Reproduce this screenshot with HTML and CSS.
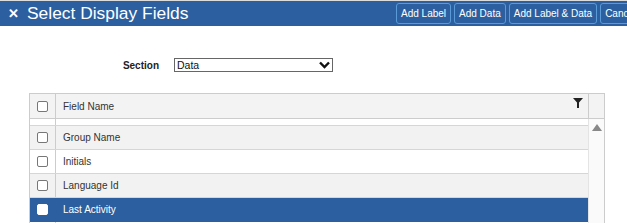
FILE: index.html
```html
<!DOCTYPE html>
<html>
<head>
<meta charset="utf-8">
<link rel="stylesheet" href="styles.css">
</head>
<body>
<div class="titlebar">
  <span class="close">✕</span>
  <span class="title">Select Display Fields</span>
  <div class="actions">
    <button class="btn">Add Label</button>
    <button class="btn">Add Data</button>
    <button class="btn">Add Label &amp; Data</button>
    <button class="btn">Cancel</button>
  </div>
</div>
<div class="content">
  <div class="section-row">
    <label class="section-label">Section</label>
    <div class="select"><span>Data</span>
      <svg class="chev" width="11" height="8" viewBox="0 0 11 8"><path d="M1 1.5 L5.5 6 L10 1.5" fill="none" stroke="#111" stroke-width="2.4"/></svg>
    </div>
  </div>
  <div class="grid">
    <div class="ghead">
      <div class="cb-cell"><span class="cb"></span></div>
      <div class="name-cell hname">Field Name
        <svg class="filter" width="10" height="10" viewBox="0 0 10 10"><path d="M0 0 H10 L6 4.5 V10 H4 V4.5 Z" fill="#222"/></svg>
      </div>
      <div class="scroll-head"></div>
    </div>
    <div class="gbody">
      <div class="rows">
        <div class="row partial"><div class="cb-cell"><span class="cb"></span></div><div class="name-cell">Group Id</div></div>
        <div class="row alt"><div class="cb-cell"><span class="cb"></span></div><div class="name-cell">Group Name</div></div>
        <div class="row"><div class="cb-cell"><span class="cb"></span></div><div class="name-cell">Initials</div></div>
        <div class="row alt"><div class="cb-cell"><span class="cb"></span></div><div class="name-cell">Language Id</div></div>
        <div class="row sel"><div class="cb-cell"><span class="cb"></span></div><div class="name-cell">Last Activity</div></div>
        <div class="row"><div class="cb-cell"><span class="cb"></span></div><div class="name-cell">Last Name</div></div>
      </div>
      <div class="scrollbar"><span class="up"></span></div>
    </div>
  </div>
</div>
</body>
</html>
```
FILE: styles.css
```css
html, body { margin: 0; padding: 0; background: #fff; overflow: hidden; }
body { font-family: "Liberation Sans", Arial, sans-serif; color: #333; width: 627px; height: 223px; }

.titlebar {
  border-top: 1px solid #dcdcdc;
  height: 26px;
  background: #2c5f9f;
  display: flex;
  align-items: center;
  color: #fff;
  white-space: nowrap;
  overflow: hidden;
  box-sizing: border-box;
}
.close { font-size: 13px; font-weight: bold; margin-left: 8px; width: 19px; flex: none; }
.title { font-size: 17.4px; width: 369px; flex: none; }
.actions { display: flex; gap: 3px; flex: none; }
.btn {
  font-family: "Liberation Sans", Arial, sans-serif;
  font-size: 10px;
  color: #fff;
  background: #2c5f9f;
  border: 1px solid #5a9ad8;
  border-radius: 3px;
  height: 21px;
  padding: 0 4px;
  line-height: 19px;
}

.content { padding: 32px 0 0 29px; }
.section-row { display: flex; align-items: center; height: 14px; }
.section-label { font-size: 10px; font-weight: bold; color: #222; width: 50px; text-align: right; margin-left: 80px; margin-right: 15px; }
.select {
  width: 153px; height: 12px; border: 1px solid #666;
  display: flex; align-items: center; justify-content: space-between;
  font-size: 10.5px; color: #111; padding: 0 2px; background: #fff;
}

.grid {
  margin-top: 21px;
  width: 574px;
  border: 1px solid #ccc;
  border-bottom: none;
}
.ghead { display: flex; height: 24px; background: #f3f3f3; border-bottom: 1px solid #ccc; }
.cb-cell { width: 25px; border-right: 1px solid #ccc; display: flex; align-items: center; justify-content: center; flex: none; }
.cb { width: 9px; height: 9px; border: 1px solid #777; border-radius: 2px; background: #fff; display: block; }
.name-cell { flex: 1; font-size: 10px; color: #333; padding-left: 7px; display: flex; align-items: center; }
.hname { justify-content: space-between; padding-right: 5px; }
.filter { margin-top: -6px; }
.scroll-head { width: 15px; border-left: 1px solid #ccc; flex: none; }

.gbody { display: flex; height: 110px; overflow: hidden; }
.rows { flex: 1; border-right: 1px solid #e4e4e4; }
.row { display: flex; height: 23px; border-bottom: 1px solid #d6d6d6; background: #fff; }
.row.alt { background: #f2f2f2; }
.row.partial { margin-top: -17px; }
.row.sel { background: #2c5f9f; border-bottom-color: #2c5f9f; }
.row.sel .name-cell { color: #fff; }
.row.sel .cb { border-color: #fff; }
.row.sel .cb-cell { border-right-color: #2c5f9f; }
.scrollbar { width: 15px; background: #fafafa; display: flex; justify-content: center; flex: none; }
.up { width: 0; height: 0; border-left: 5px solid transparent; border-right: 5px solid transparent; border-bottom: 7px solid #888; margin-top: 5px; }
```
